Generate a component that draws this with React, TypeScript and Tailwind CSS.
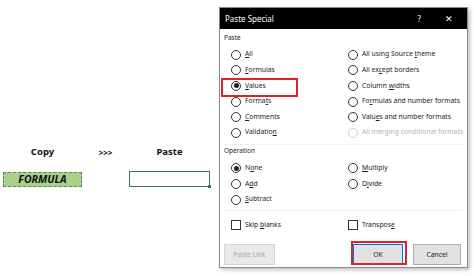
import React from "react";

const font = { fontFamily: '"Noto Sans", "Open Sans", sans-serif' };

function Radio({ checked, disabled }: { checked?: boolean; disabled?: boolean }) {
  return (
    <span
      className={`flex h-[10px] w-[10px] shrink-0 items-center justify-center rounded-full border ${
        disabled ? "border-[#d0d0d0]" : "border-[#333]"
      } bg-white`}
    >
      {checked && <span className="h-[5px] w-[5px] rounded-full bg-[#222]" />}
    </span>
  );
}

function Label({ label, u }: { label: string; u?: number }) {
  if (u === undefined) return <>{label}</>;
  return (
    <>
      {label.slice(0, u)}
      <span className="underline underline-offset-[1px]">{label[u]}</span>
      {label.slice(u + 1)}
    </>
  );
}

function Opt({
  label,
  u,
  checked,
  disabled,
}: {
  label: string;
  u?: number;
  checked?: boolean;
  disabled?: boolean;
}) {
  return (
    <div className="flex h-[15.6px] items-center gap-[4px] whitespace-nowrap">
      <Radio checked={checked} disabled={disabled} />
      <span className={`text-[6.8px] leading-none ${disabled ? "text-[#b4b4b4]" : "text-[#222]"}`}>
        <Label label={label} u={u} />
      </span>
    </div>
  );
}

function Check({ label, u }: { label: string; u: number }) {
  return (
    <div className="flex items-center gap-[4px] whitespace-nowrap">
      <span className="h-[10px] w-[10px] border border-[#333] bg-white" />
      <span className="text-[6.8px] leading-none text-[#222]">
        <Label label={label} u={u} />
      </span>
    </div>
  );
}

export default function App() {
  return (
    <div className="relative flex h-[276px] w-[474px] overflow-hidden bg-white" style={font}>
      {/* Spreadsheet area */}
      <div className="flex w-[219px] shrink-0 flex-col pt-[146px]">
        <div className="flex h-[13px] items-center text-[9.5px] font-bold text-[#111]">
          <span className="ml-[3px] w-[79px] text-center">Copy</span>
          <span className="w-[47px] text-center text-[8px]">{">>>"}</span>
          <span className="w-[81px] text-center">Paste</span>
        </div>
        <div className="mt-[12px] flex items-center">
          <div className="ml-[3px] flex h-[15px] w-[79px] items-center justify-center border border-dashed border-[#5a8a3c] bg-[#a9d08e] text-[10.5px] font-bold italic leading-none text-[#111]">
            FORMULA
          </div>
          <div className="relative ml-[47px] h-[16px] w-[81px] border-[1.5px] border-[#2e7d58] bg-white">
            <span className="absolute -bottom-[2px] -right-[2px] h-[3px] w-[3px] bg-[#2e7d58]" />
          </div>
        </div>
      </div>

      {/* Dialog */}
      <div className="relative mt-[7px] flex h-[261px] w-[249px] flex-col border border-[#8a8a8a] bg-white shadow-[2px_2px_4px_rgba(0,0,0,0.25)]">
        <div className="flex h-[21px] shrink-0 items-center bg-black px-[5px] text-white">
          <span className="text-[8px]">Paste Special</span>
          <span className="ml-auto mr-[24px] text-[8px]">?</span>
          <span className="mr-[9px] text-[9px] leading-none">✕</span>
        </div>

        <div className="px-[4px] pt-[4px]">
          <div className="text-[6.5px] leading-[10px] text-[#222]">Paste</div>
          <div className="mt-[4px] grid grid-cols-[117px_1fr] pl-[7px]">
            <div className="flex flex-col">
              <Opt label="All" u={0} />
              <Opt label="Formulas" u={0} />
              <Opt label="Values" u={0} checked />
              <Opt label="Formats" u={5} />
              <Opt label="Comments" u={0} />
              <Opt label="Validation" u={9} />
            </div>
            <div className="flex flex-col">
              <Opt label="All using Source theme" u={17} />
              <Opt label="All except borders" u={6} />
              <Opt label="Column widths" u={7} />
              <Opt label="Formulas and number formats" u={2} />
              <Opt label="Values and number formats" u={4} />
              <Opt label="All merging conditional formats" disabled />
            </div>
          </div>
          <div className="mt-[3px] border-t border-[#f0f0f0]" />
          <div className="mt-[1px] text-[6.5px] leading-[10px] text-[#222]">Operation</div>
          <div className="mt-[5px] grid grid-cols-[117px_1fr] pl-[7px]">
            <div className="flex flex-col">
              <Opt label="None" u={1} checked />
              <Opt label="Add" u={1} />
              <Opt label="Subtract" u={0} />
            </div>
            <div className="flex flex-col">
              <Opt label="Multiply" u={0} />
              <Opt label="Divide" u={1} />
            </div>
          </div>
          <div className="mt-[3px] border-t border-[#f0f0f0]" />
          <div className="mt-[9px] grid grid-cols-[117px_1fr] pl-[7px]">
            <Check label="Skip blanks" u={5} />
            <Check label="Transpose" u={8} />
          </div>
          <div className="mt-[14px] flex items-center">
            <div className="flex h-[21px] w-[51px] items-center justify-center border border-[#d6d6d6] bg-[#e9e9e9] text-[6.8px] text-[#a8a8a8]">
              Paste Link
            </div>
            <div className="ml-[78px] flex h-[21px] w-[50px] items-center justify-center border border-[#0078d7] bg-[#e1e1e1] text-[6.8px] text-[#222]">
              OK
            </div>
            <div className="ml-[10px] flex h-[21px] w-[48px] items-center justify-center border border-[#adadad] bg-[#e1e1e1] text-[6.8px] text-[#222]">
              Cancel
            </div>
          </div>
        </div>

        {/* red highlight annotations */}
        <div className="pointer-events-none absolute left-[1px] top-[70px] h-[19px] w-[77px] border-2 border-[#e0202a]" />
        <div className="pointer-events-none absolute left-[131px] top-[233px] h-[24px] w-[56px] border-2 border-[#e0202a]" />
      </div>
    </div>
  );
}
